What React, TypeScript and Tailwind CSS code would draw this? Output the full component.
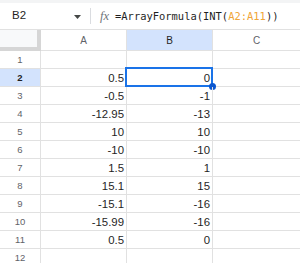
import React from "react";

const rows: [string, string][] = [
  ["", ""],
  ["0.5", "0"],
  ["-0.5", "-1"],
  ["-12.95", "-13"],
  ["10", "10"],
  ["-10", "-10"],
  ["1.5", "1"],
  ["15.1", "15"],
  ["-15.1", "-16"],
  ["-15.99", "-16"],
  ["0.5", "0"],
  ["", ""],
];

export default function App() {
  return (
    <div
      className="w-[300px] h-[263px] overflow-hidden bg-white text-[#1f1f1f]"
      style={{ fontFamily: '"Liberation Sans", Arial, sans-serif' }}
    >
      <div className="h-[3px] bg-[#f3f4f5]" />
      <div className="h-[27px] flex items-center border-b border-[#e1e1e1]">
        <div className="w-[90px] flex items-center pl-[12px] pr-[9px]">
          <span className="text-[11.5px] leading-none">B2</span>
          <span className="flex-1" />
          <svg width="7" height="4" viewBox="0 0 7 4" className="mt-[1px]">
            <path d="M0 0 L7 0 L3.5 4 Z" fill="#444746" />
          </svg>
        </div>
        <div className="w-px h-[16px] bg-[#dadce0]" />
        <span
          className="ml-[9px] text-[12.5px] italic text-[#70757a] leading-none"
          style={{ fontFamily: '"Liberation Serif", serif' }}
        >
          fx
        </span>
        <span
          className="ml-[6px] text-[10.45px] leading-none whitespace-nowrap text-[#1f1f1f]"
          style={{ fontFamily: '"DejaVu Sans Mono", monospace' }}
        >
          =ArrayFormula(INT(<span className="text-[#f0a537]">A2:A11</span>))
        </span>
      </div>
      <div className="grid grid-cols-[41px_86px_86px_87px]">
        <div className="h-[21px] bg-[#f8f9fa] border-r-[4px] border-b-[4px] border-[#d6d6d6]" />
        <div className="h-[21px] flex items-center justify-center border-r border-b border-[#e1e1e1] text-[10px] text-[#5f6368] pt-[1px]">
          A
        </div>
        <div className="h-[21px] flex items-center justify-center border-r border-b border-[#e1e1e1] bg-[#d3e3fd] text-[10px] text-[#1f1f1f] font-medium pt-[1px]">
          B
        </div>
        <div className="h-[21px] flex items-center justify-center border-b border-[#e1e1e1] text-[10px] text-[#5f6368] pt-[1px]">
          C
        </div>
        {rows.map(([a, b], i) => {
          const n = i + 1;
          const sel = n === 2;
          return (
            <React.Fragment key={n}>
              <div
                className={
                  sel
                    ? "h-[18px] flex items-center justify-center border-r border-b border-[#e1e1e1] bg-[#d3e3fd] text-[9.5px] font-bold text-[#1f1f1f] pt-[1px]"
                    : "h-[18px] flex items-center justify-center border-r border-b border-[#e1e1e1] text-[9.5px] text-[#5f6368] pt-[1px]"
                }
              >
                {n}
              </div>
              <div className="h-[18px] flex items-center justify-end border-r border-b border-[#e1e1e1] pr-[2px] pt-[1px] text-[11.4px] leading-[17px] text-[#1f1f1f]">
                {a}
              </div>
              <div className="relative h-[18px] flex items-center justify-end border-r border-b border-[#e1e1e1] pr-[2px] pt-[1px] text-[11.4px] leading-[17px] text-[#1f1f1f]">
                {b}
                {sel && (
                  <>
                    <div className="absolute -left-[2px] -top-[2px] -right-[1px] -bottom-[1px] border-2 border-[#1a73e8]" />
                    <div className="absolute -right-[4px] -bottom-[4px] w-[7px] h-[7px] rounded-full bg-[#0b57d0]" />
                  </>
                )}
              </div>
              <div className="h-[18px] border-b border-[#e1e1e1]" />
            </React.Fragment>
          );
        })}
      </div>
    </div>
  );
}
